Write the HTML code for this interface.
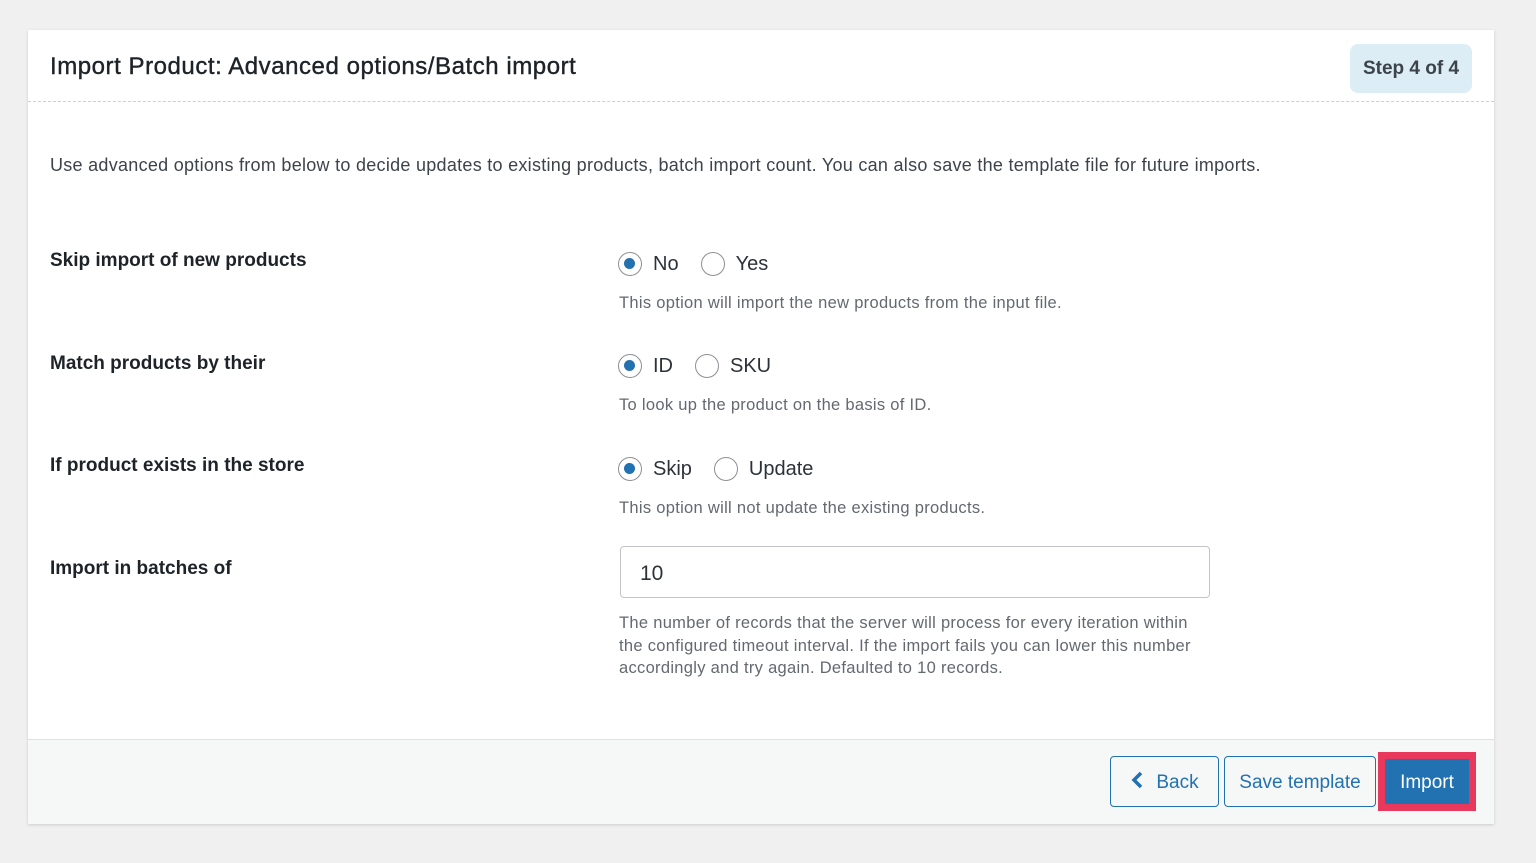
<!DOCTYPE html>
<html><head><style>
*{box-sizing:border-box;margin:0;padding:0}
body{width:1536px;height:863px;background:#f0f0f1;font-family:"Liberation Sans",sans-serif;color:#1d2327;position:relative;overflow:hidden}
.card{position:absolute;left:28px;top:30px;width:1466px;height:794px;background:#fff;box-shadow:0 1px 3px rgba(0,0,0,.15)}
.hdr{position:absolute;left:0;top:0;width:100%;height:72px;border-bottom:1px dashed #dcc9d0}
.title{position:absolute;left:22px;top:23px;font-size:24px;color:#1d2327;letter-spacing:0.55px;-webkit-text-stroke:0.4px #1d2327}
.step{position:absolute;left:1322px;top:14px;width:122px;height:49px;background:#dcedf5;border-radius:8px;font-size:19px;font-weight:bold;color:#3c434a;text-align:center;line-height:49px}
.desc{position:absolute;left:22px;top:125px;font-size:18px;color:#3c434a;letter-spacing:0.28px}
.lbl{position:absolute;left:22px;font-size:19px;font-weight:bold;color:#1d2327}
.opts{position:absolute;left:590px;font-size:20px;color:#2c3338;display:flex;align-items:center}
.r{width:24px;height:24px;border-radius:50%;border:1.5px solid #8c8f94;display:inline-block;margin-right:11px;position:relative}
.r.on::after{content:"";position:absolute;left:5px;top:5px;width:11px;height:11px;border-radius:50%;background:#2271b1}
.help{position:absolute;left:591px;font-size:16.5px;color:#646970;line-height:22.5px;letter-spacing:0.3px}
.inp{position:absolute;left:592px;top:516px;width:590px;height:52px;border:1px solid #c3c4c7;border-radius:4px;font-size:21px;padding:15px 0 0 19px;color:#2c3338}
.foot{position:absolute;left:0;top:709px;width:100%;height:85px;background:#f6f7f7;border-top:1px solid #e0e0e0}
.btn{position:absolute;top:16px;height:51px;border:1px solid #2271b1;border-radius:4px;background:#f6f7f7;color:#2271b1;font-size:19px;line-height:51px;text-align:center}
</style></head><body>
<div class="card">
 <div class="hdr"><div class="title">Import Product: Advanced options/Batch import</div><div class="step">Step 4 of 4</div></div>
 <div class="desc">Use advanced options from below to decide updates to existing products, batch import count. You can also save the template file for future imports.</div>

 <div class="lbl" style="top:220px">Skip import of new products</div>
 <div class="opts" style="top:222px"><span class="r on"></span>No<span class="r" style="margin-left:22px"></span>Yes</div>
 <div class="help" style="top:262px">This option will import the new products from the input file.</div>

 <div class="lbl" style="top:323px">Match products by their</div>
 <div class="opts" style="top:324px"><span class="r on"></span>ID<span class="r" style="margin-left:22px"></span>SKU</div>
 <div class="help" style="top:364px">To look up the product on the basis of ID.</div>

 <div class="lbl" style="top:425px">If product exists in the store</div>
 <div class="opts" style="top:427px"><span class="r on"></span>Skip<span class="r" style="margin-left:22px"></span>Update</div>
 <div class="help" style="top:467px">This option will not update the existing products.</div>

 <div class="lbl" style="top:528px">Import in batches of</div>
 <div class="inp">10</div>
 <div class="help" style="top:582px">The number of records that the server will process for every iteration within<br>the configured timeout interval. If the import fails you can lower this number<br>accordingly and try again. Defaulted to 10 records.</div>

 <div class="foot">
  <div class="btn" style="left:1082px;width:109px"><svg width="14" height="20" viewBox="0 0 14 20" style="vertical-align:-2px;margin-right:12px"><path d="M11 3 L4 10 L11 17" stroke="#2271b1" stroke-width="3.5" fill="none"/></svg>Back</div>
  <div class="btn" style="left:1196px;width:152px">Save template</div>
  <div style="position:absolute;left:1350px;top:12px;width:98px;height:59px;background:#e8395d"></div>
  <div style="position:absolute;left:1357px;top:19px;width:84px;height:45px;background:#2271b1;color:#fff;font-size:19px;line-height:47px;text-align:center">Import</div>
 </div>
</div>
</body></html>
